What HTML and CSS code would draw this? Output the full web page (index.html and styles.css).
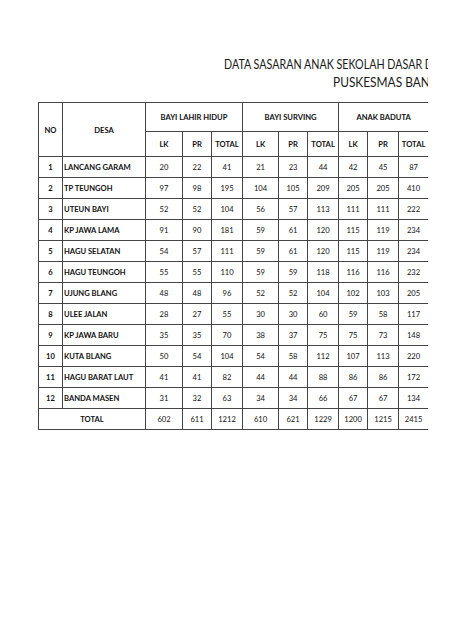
FILE: index.html
```html
<!DOCTYPE html>
<html>
<head>
<meta charset="utf-8">
<link rel="stylesheet" href="styles.css">
</head>
<body>
<div class="sheet">
  <div class="title1"><span class="squeeze">DATA SASARAN ANAK SEKOLAH DASAR DAN SEDERAJAT</span></div>
  <div class="title2"><span class="squeeze">PUSKESMAS BANDA SAKTI</span></div>
  <table class="grid">
    <colgroup>
      <col class="c-no"><col class="c-desa">
      <col class="c37"><col class="c29"><col class="c31">
      <col class="c36"><col class="c29"><col class="c31">
      <col class="c29"><col class="c31"><col class="c30">
    </colgroup>
    <thead>
      <tr class="h1">
        <th rowspan="2">NO</th>
        <th rowspan="2">DESA</th>
        <th colspan="3">BAYI LAHIR HIDUP</th>
        <th colspan="3">BAYI SURVING</th>
        <th colspan="3">ANAK BADUTA</th>
      </tr>
      <tr class="h2">
        <th>LK</th><th>PR</th><th>TOTAL</th>
        <th>LK</th><th>PR</th><th>TOTAL</th>
        <th>LK</th><th>PR</th><th>TOTAL</th>
      </tr>
    </thead>
    <tbody>
      <tr><td class="no">1</td><td class="desa">LANCANG GARAM</td><td>20</td><td>22</td><td>41</td><td>21</td><td>23</td><td>44</td><td>42</td><td>45</td><td>87</td></tr>
      <tr><td class="no">2</td><td class="desa">TP TEUNGOH</td><td>97</td><td>98</td><td>195</td><td>104</td><td>105</td><td>209</td><td>205</td><td>205</td><td>410</td></tr>
      <tr><td class="no">3</td><td class="desa">UTEUN BAYI</td><td>52</td><td>52</td><td>104</td><td>56</td><td>57</td><td>113</td><td>111</td><td>111</td><td>222</td></tr>
      <tr><td class="no">4</td><td class="desa">KP JAWA LAMA</td><td>91</td><td>90</td><td>181</td><td>59</td><td>61</td><td>120</td><td>115</td><td>119</td><td>234</td></tr>
      <tr><td class="no">5</td><td class="desa">HAGU SELATAN</td><td>54</td><td>57</td><td>111</td><td>59</td><td>61</td><td>120</td><td>115</td><td>119</td><td>234</td></tr>
      <tr><td class="no">6</td><td class="desa">HAGU TEUNGOH</td><td>55</td><td>55</td><td>110</td><td>59</td><td>59</td><td>118</td><td>116</td><td>116</td><td>232</td></tr>
      <tr><td class="no">7</td><td class="desa">UJUNG BLANG</td><td>48</td><td>48</td><td>96</td><td>52</td><td>52</td><td>104</td><td>102</td><td>103</td><td>205</td></tr>
      <tr><td class="no">8</td><td class="desa">ULEE JALAN</td><td>28</td><td>27</td><td>55</td><td>30</td><td>30</td><td>60</td><td>59</td><td>58</td><td>117</td></tr>
      <tr><td class="no">9</td><td class="desa">KP JAWA BARU</td><td>35</td><td>35</td><td>70</td><td>38</td><td>37</td><td>75</td><td>75</td><td>73</td><td>148</td></tr>
      <tr><td class="no">10</td><td class="desa">KUTA BLANG</td><td>50</td><td>54</td><td>104</td><td>54</td><td>58</td><td>112</td><td>107</td><td>113</td><td>220</td></tr>
      <tr><td class="no">11</td><td class="desa">HAGU BARAT LAUT</td><td>41</td><td>41</td><td>82</td><td>44</td><td>44</td><td>88</td><td>86</td><td>86</td><td>172</td></tr>
      <tr><td class="no">12</td><td class="desa">BANDA MASEN</td><td>31</td><td>32</td><td>63</td><td>34</td><td>34</td><td>66</td><td>67</td><td>67</td><td>134</td></tr>
      <tr class="total"><td colspan="2" class="tot-label">TOTAL</td><td>602</td><td>611</td><td>1212</td><td>610</td><td>621</td><td>1229</td><td>1200</td><td>1215</td><td>2415</td></tr>
    </tbody>
  </table>
</div>
</body>
</html>
```
FILE: styles.css
```css
html, body {
  margin: 0;
  padding: 0;
  background: #ffffff;
}
.sheet {
  width: 428px;
  overflow: hidden;
  font-family: Lato, "Open Sans", "Liberation Sans", sans-serif;
  color: #111;
  padding-top: 57px;
}
.title1 {
  white-space: nowrap;
  padding-left: 224px;
  font-size: 12.6px;
  line-height: 16px;
  color: #1a1a1a;
}
.title2 {
  white-space: nowrap;
  padding-left: 333px;
  font-size: 14px;
  line-height: 18px;
  margin-top: 0;
  color: #1a1a1a;
}
.squeeze {
  display: inline-block;
  transform: scaleX(0.85);
  transform-origin: 0 0;
}
.grid {
  margin-top: 11px;
  margin-left: 38px;
  width: 390px;
  border-collapse: collapse;
  table-layout: fixed;
  border: 1px solid #333;
}
.c-no { width: 24px; }
.c-desa { width: 83px; }
.c37 { width: 37px; }
.c36 { width: 36px; }
.c29 { width: 29px; }
.c31 { width: 31px; }
.c30 { width: 30px; }
.grid th, .grid td {
  border: 1px solid #444;
  padding: 0;
  text-align: center;
  font-size: 7.6px;
  white-space: nowrap;
  overflow: hidden;
}
.grid th {
  font-weight: 700;
}
.h1 th { height: 28px; }
.h2 th { height: 24px; }
.grid td {
  height: 20px;
  font-weight: 400;
  color: #111;
}
.grid td.no { font-weight: 700; }
.grid td.desa {
  text-align: left;
  padding-left: 1px;
  font-weight: 700;
}
.grid td.tot-label { font-weight: 700; }
```
